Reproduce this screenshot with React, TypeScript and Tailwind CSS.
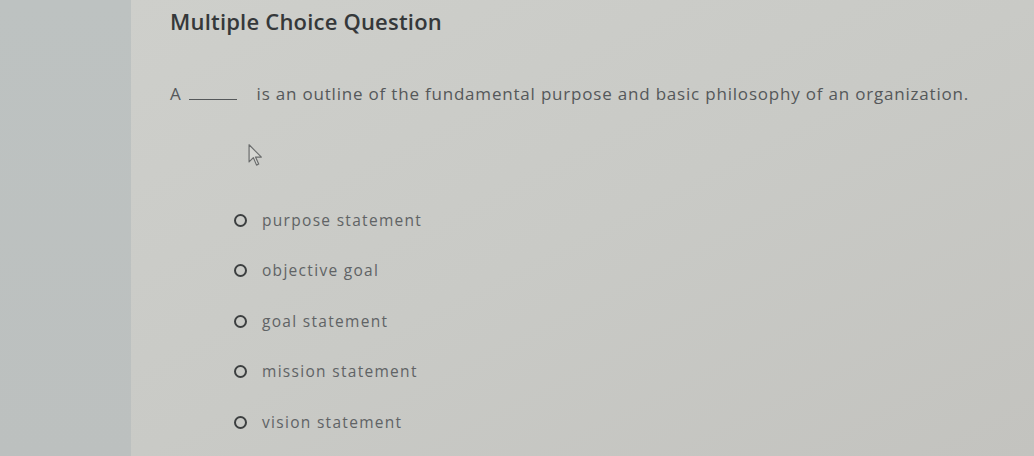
import React from "react";

const OPTIONS = [
  "purpose statement",
  "objective goal",
  "goal statement",
  "mission statement",
  "vision statement",
];

const Cursor = () => (
  <svg width="15" height="25" viewBox="0 0 14 22" className="ml-[78px]">
    <path
      d="M1 1 L1 17 L5 13 L8 20 L10 19 L7 12.5 L12.5 12.5 Z"
      fill="#d6d7d3"
      stroke="#6a6c6c"
      strokeWidth="1.1"
      strokeLinejoin="round"
    />
  </svg>
);

const Radio = () => (
  <span className="block w-[13px] h-[13px] rounded-full border-[2.5px] border-[#3c3f40]" />
);

export default function App() {
  return (
    <div className="flex w-[1034px] h-[456px] overflow-hidden font-['Open_Sans','Noto_Sans',sans-serif]">
      <div className="w-[131px] shrink-0 bg-linear-to-b from-[#bdc2c1] to-[#bcc0bf]" />
      <div className="flex-1 bg-linear-to-br from-[#cecfcb] via-[#c9cac6] to-[#c3c3bf] pl-[39px] pt-[5px]">
        <h1 className="text-[22px] font-semibold text-[#35383a] tracking-[0.2px]">
          Multiple Choice Question
        </h1>
        <p className="mt-[43px] flex items-baseline text-[17px] tracking-[0.8px] text-[#55585a]">
          <span>A</span>
          <span className="inline-block w-[48px] border-b border-[#55585a] ml-[7px] mr-[20px]" />
          <span>is an outline of the fundamental purpose and basic philosophy of an organization.</span>
        </p>
        <div className="mt-[36px]">
          <Cursor />
        </div>
        <ul className="mt-[43px] ml-[64px] flex flex-col gap-[31px]">
          {OPTIONS.map((o) => (
            <li key={o} className="flex items-center gap-[15px] h-[19.5px]">
              <Radio />
              <span className="text-[15.5px] tracking-[1.3px] text-[#606365]">{o}</span>
            </li>
          ))}
        </ul>
      </div>
    </div>
  );
}
